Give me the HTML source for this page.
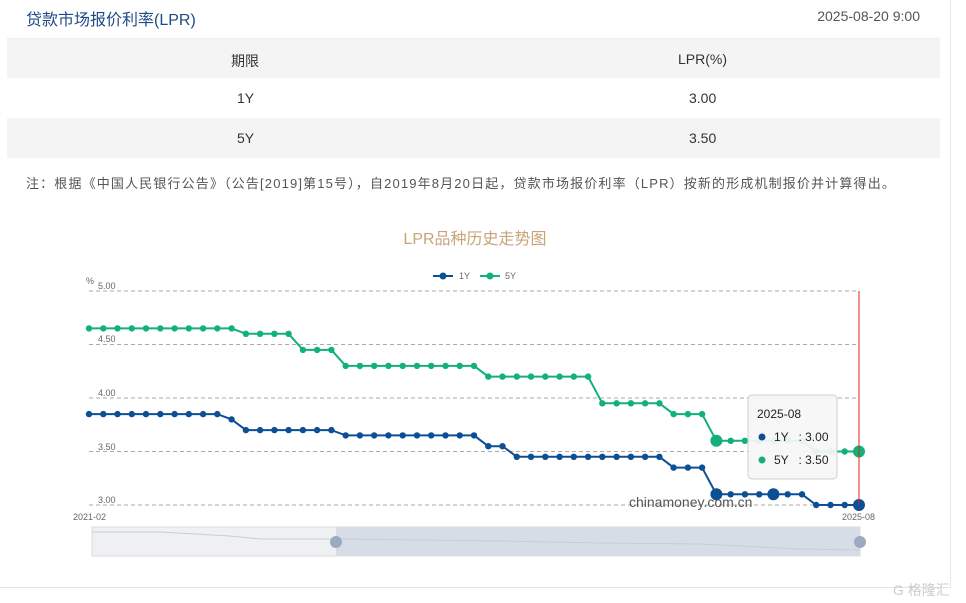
<!DOCTYPE html>
<html><head><meta charset="utf-8"><style>
*{margin:0;padding:0;box-sizing:border-box}
body{width:966px;height:603px;background:#fff;font-family:"Liberation Sans","Noto Sans CJK SC",sans-serif;position:relative;overflow:hidden}
.title{position:absolute;left:26px;top:6px;font-size:16px;color:#1e4a86}
.date{position:absolute;right:46px;top:8px;font-size:14px;color:#555}
.vline{position:absolute;left:950px;top:0;width:1px;height:588px;background:#e6e6e6}
.hline{position:absolute;left:0;top:587px;width:951px;height:1px;background:#e3e3e3}
.row{position:absolute;left:7px;width:933px;height:40px;font-size:14px;color:#333}
.row span{position:absolute;top:12px}
.g{background:#f4f4f4}
.note{position:absolute;left:26px;top:173px;font-size:13px;color:#555;letter-spacing:1.15px;white-space:nowrap}
.ct{position:absolute;left:0;width:950px;top:225px;text-align:center;font-size:16px;color:#c8a479}
</style></head><body>
<div class="title">贷款市场报价利率(LPR)</div>
<div class="date">2025-08-20 9:00</div>
<div class="vline"></div><div class="hline"></div>
<div class="row g" style="top:38px;border-top:1px solid #eee"><span style="left:224px">期限</span><span style="left:671px">LPR(%)</span></div>
<div class="row" style="top:78px"><span style="left:230px">1Y</span><span style="left:682px">3.00</span></div>
<div class="row g" style="top:118px"><span style="left:230px">5Y</span><span style="left:682px">3.50</span></div>
<div class="note">注：根据《中国人民银行公告》（公告[2019]第15号），自2019年8月20日起，贷款市场报价利率（LPR）按新的形成机制报价并计算得出。</div>
<div class="ct">LPR品种历史走势图</div>
<svg width="966" height="603" style="position:absolute;left:0;top:0" font-family="Liberation Sans, sans-serif">
<g stroke="#aaa" stroke-dasharray="4,3" stroke-width="1">
<line x1="89" y1="291" x2="859" y2="291"/><line x1="89" y1="344.5" x2="859" y2="344.5"/><line x1="89" y1="398" x2="859" y2="398"/><line x1="89" y1="451.5" x2="859" y2="451.5"/><line x1="89" y1="505" x2="859" y2="505"/>
</g>
<g font-size="9" fill="#666"><text x="86" y="284">%</text><text x="98" y="289">5.00</text><text x="98" y="342">4.50</text><text x="98" y="396">4.00</text><text x="98" y="450">3.50</text><text x="98" y="503">3.00</text>
<text x="73" y="520">2021-02</text><text x="842" y="520">2025-08</text></g>
<g font-size="9" fill="#666"><line x1="433" y1="276" x2="453" y2="276" stroke="#0d4f94" stroke-width="2"/><circle cx="443" cy="276" r="3.5" fill="#0d4f94"/><text x="459" y="279">1Y</text>
<line x1="480" y1="276" x2="500" y2="276" stroke="#12b17a" stroke-width="2"/><circle cx="490" cy="276" r="3.5" fill="#12b17a"/><text x="505" y="279">5Y</text></g>
<rect x="92" y="527" width="768" height="29" fill="#eef0f2" stroke="#ddd"/>
<rect x="336" y="527" width="524" height="29" fill="#d6dde6"/>
<polyline points="92,532 160,532 230,536 260,539 340,539 500,541 600,543 700,544 800,549 860,550" fill="none" stroke="#c8cdd3"/>
<circle cx="336" cy="542" r="6" fill="#9aaac0"/><circle cx="860" cy="542" r="6" fill="#9aaac0"/>
<g id="lines"></g>
<line x1="859" y1="291" x2="859" y2="505" stroke="#e02020" stroke-width="1"/>
<text x="629" y="507" font-size="14" fill="#555">chinamoney.com.cn</text>
<rect x="748" y="395" width="89" height="84" rx="4" fill="#f7f7f7" stroke="#ccc" opacity="0.93"/>
<text x="757" y="418" font-size="12" fill="#222">2025-08</text>
<circle cx="762" cy="437" r="3.5" fill="#0d4f94"/><text x="774" y="441" font-size="12" fill="#222" xml:space="preserve">1Y   : 3.00</text>
<circle cx="762" cy="460" r="3.5" fill="#12b17a"/><text x="774" y="464" font-size="12" fill="#222" xml:space="preserve">5Y   : 3.50</text>
<text x="893" y="595" font-size="14" fill="#ccc">G 格隆汇</text>
</svg>
<script>
var a=[],b=[];function p(arr,v,n){for(var i=0;i<n;i++)arr.push(v)}
p(a,3.85,10);p(a,3.80,1);p(a,3.70,7);p(a,3.65,10);p(a,3.55,2);p(a,3.45,11);p(a,3.35,3);p(a,3.10,7);p(a,3.00,4);
p(b,4.65,11);p(b,4.60,4);p(b,4.45,3);p(b,4.30,10);p(b,4.20,8);p(b,3.95,5);p(b,3.85,3);p(b,3.60,7);p(b,3.50,4);
var s='';function ser(arr,c,big){var pts=[];arr.forEach(function(v,i){pts.push((89+i*770/54).toFixed(1)+','+(505-(v-3)*107).toFixed(1))});
s+='<polyline points="'+pts.join(' ')+'" fill="none" stroke="'+c+'" stroke-width="2"/>';
pts.forEach(function(q,i){var x=q.split(','),r=big.indexOf(i)>=0?6:3.2;s+='<circle cx="'+x[0]+'" cy="'+x[1]+'" r="'+r+'" fill="'+c+'"/>'})}
ser(b,'#12b17a',[44,54]);ser(a,'#0d4f94',[44,48,54]);
document.getElementById('lines').innerHTML=s;
</script>
</body></html>
